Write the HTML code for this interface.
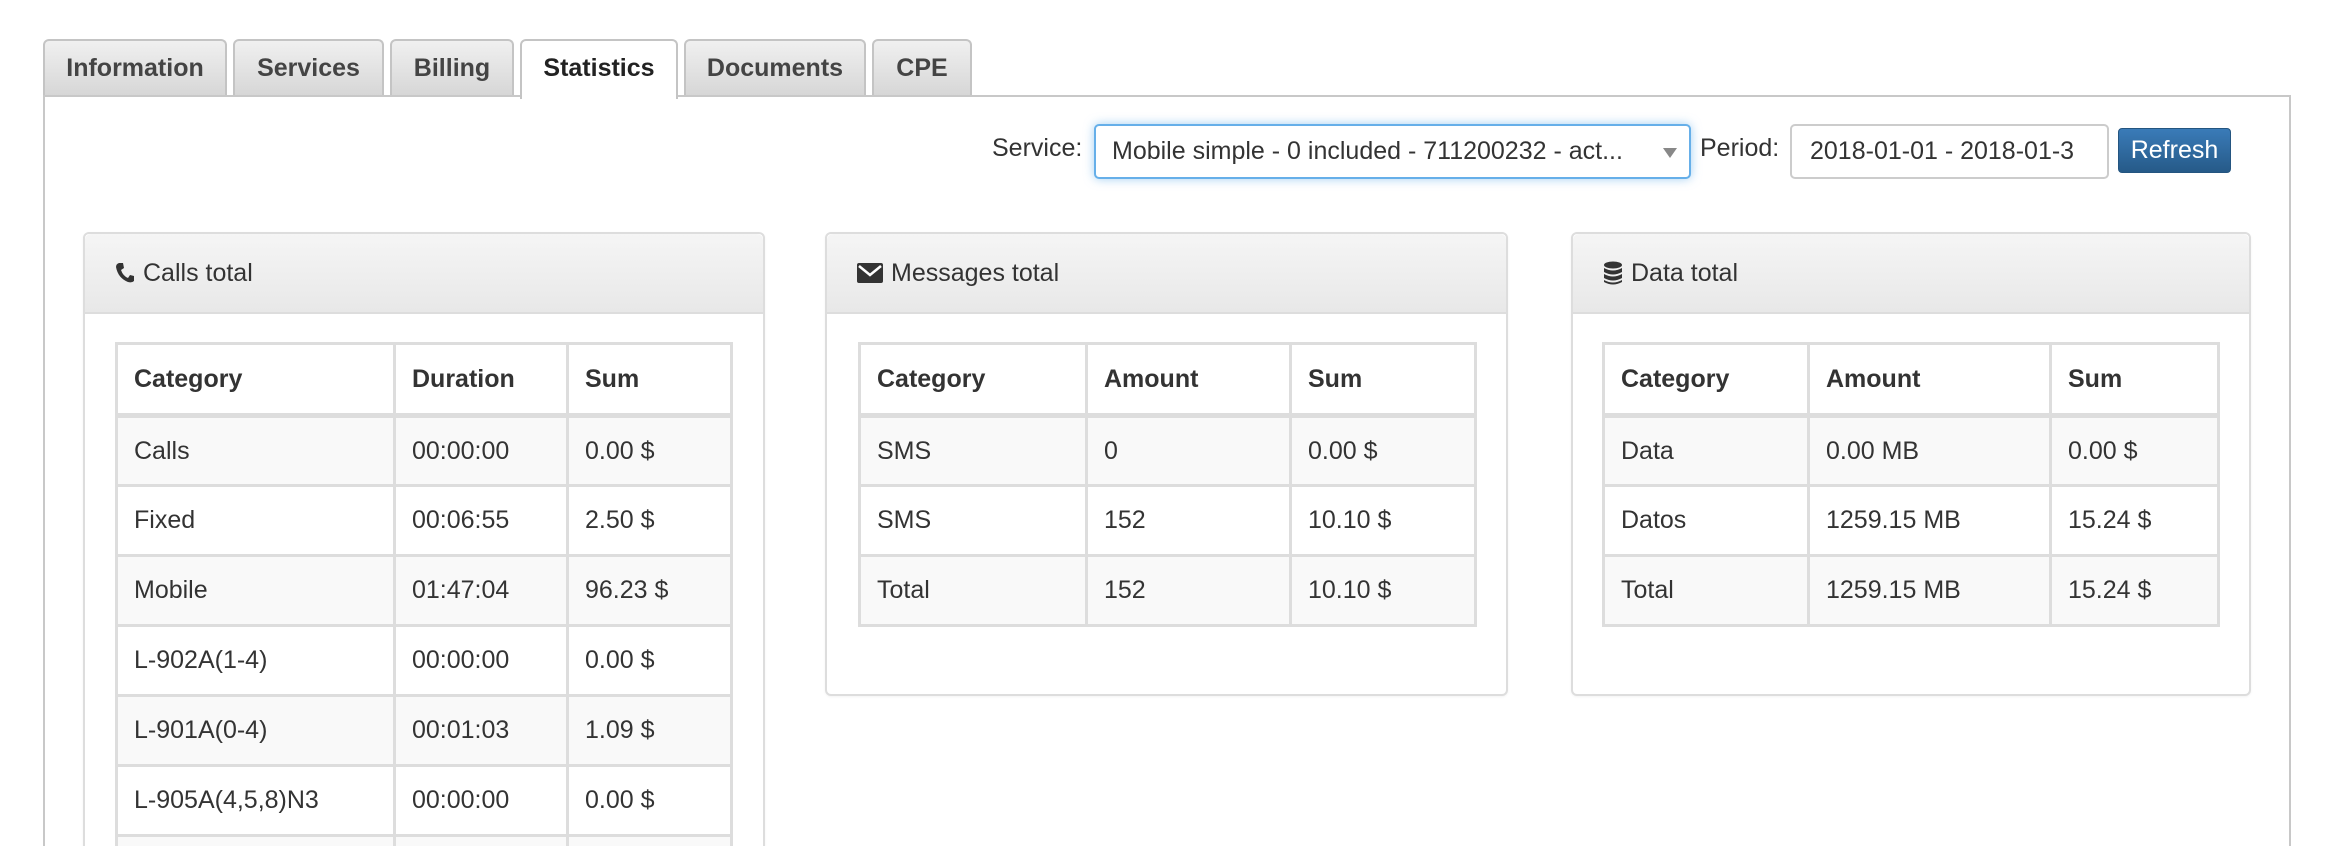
<!DOCTYPE html>
<html><head><meta charset="utf-8"><style>
*{box-sizing:border-box;margin:0;padding:0}
html,body{width:2340px;height:846px;overflow:hidden}
body{background:#fff;font-family:"Liberation Sans",Arial,sans-serif;color:#333;position:relative}
.tab{position:absolute;top:39px;height:57px;border:2px solid #c4c4c4;border-bottom:none;border-radius:6px 6px 0 0;background:linear-gradient(#f0f0f0,#d6d6d6);font-weight:bold;font-size:25px;text-align:center;line-height:54px;color:#444}
.tab.act{background:#fff;height:60px;color:#222;z-index:2}
.content{position:absolute;left:43px;top:95px;width:2248px;height:751px;border:2px solid #c8c8c8;border-bottom:none}
.lbl{position:absolute;font-size:25px;color:#333}
.sel{position:absolute;left:1094px;top:124px;width:597px;height:55px;border:2px solid #66afe9;border-radius:5px;box-shadow:0 0 10px rgba(102,175,233,.6);font-size:25px;line-height:51px;padding-left:16px;background:#fff}
.sel:after{content:"";position:absolute;right:12px;top:22px;border-left:7px solid transparent;border-right:7px solid transparent;border-top:10px solid #888}
.inp{position:absolute;left:1790px;top:124px;width:319px;height:55px;border:2px solid #ccc;border-radius:5px;font-size:25px;line-height:51px;padding-left:18px;background:#fff}
.btn{position:absolute;left:2118px;top:128px;width:113px;height:45px;border-radius:4px;background:linear-gradient(#3a7bb8,#265a88);border:1px solid #245580;color:#fff;font-size:25px;line-height:43px;text-align:center}
.panel{position:absolute;top:232px;border:2px solid #ddd;border-radius:6px;background:#fff;box-shadow:0 1px 2px rgba(0,0,0,.05)}
.ph{height:80px;background:linear-gradient(#f5f5f5,#e8e8e8);border-bottom:2px solid #ddd;border-radius:6px 6px 0 0;font-size:25px;line-height:78px;padding-left:30px;display:flex;align-items:center;gap:8px}
table{position:absolute;border-collapse:collapse;font-size:25px;table-layout:fixed}
td,th{border:3px solid #ddd;height:70px;padding:0 0 0 16px;text-align:left;vertical-align:middle}
th{font-weight:bold;border-bottom:5px solid #ddd;height:72px}
tr:nth-child(even) td{background:#f9f9f9}
</style></head><body>
<div class="tab" style="left:43px;width:184px">Information</div>
<div class="tab" style="left:233px;width:151px">Services</div>
<div class="tab" style="left:390px;width:124px">Billing</div>
<div class="tab act" style="left:520px;width:158px">Statistics</div>
<div class="tab" style="left:684px;width:182px">Documents</div>
<div class="tab" style="left:872px;width:100px">CPE</div>
<div class="content"></div>
<div class="lbl" style="left:992px;top:134px">Service:</div>
<div class="sel">Mobile simple - 0 included - 711200232 - act...</div>
<div class="lbl" style="left:1700px;top:134px">Period:</div>
<div class="inp">2018-01-01 - 2018-01-3</div>
<div class="btn">Refresh</div>

<div class="panel" style="left:83px;width:682px;height:620px">
<div class="ph"><svg width="20" height="22" viewBox="0 0 20 22"><path d="M4 1 L8 1 L9 6 L6 8 Q8 14 13 16 L15 13 L19 14 L19 19 Q17 21 13 20 Q3 16 1 5 Q1 2 4 1Z" fill="#333"/></svg>Calls total</div>
</div>
<table style="left:115px;top:342px;width:618px">
<colgroup><col style="width:278px"><col style="width:173px"><col></colgroup>
<tr><th>Category</th><th>Duration</th><th>Sum</th></tr>
<tr><td>Calls</td><td>00:00:00</td><td>0.00 $</td></tr>
<tr><td>Fixed</td><td>00:06:55</td><td>2.50 $</td></tr>
<tr><td>Mobile</td><td>01:47:04</td><td>96.23 $</td></tr>
<tr><td>L-902A(1-4)</td><td>00:00:00</td><td>0.00 $</td></tr>
<tr><td>L-901A(0-4)</td><td>00:01:03</td><td>1.09 $</td></tr>
<tr><td>L-905A(4,5,8)N3</td><td>00:00:00</td><td>0.00 $</td></tr>
</table>
<div style="position:absolute;left:115px;top:834px;width:618px;height:12px;border:3px solid #ddd;border-bottom:none;background:#f9f9f9"><div style="position:absolute;left:275px;top:0;width:3px;height:12px;background:#ddd"></div><div style="position:absolute;left:448px;top:0;width:3px;height:12px;background:#ddd"></div></div>

<div class="panel" style="left:825px;width:683px;height:464px">
<div class="ph"><svg width="26" height="20" viewBox="0 0 26 20"><rect x="0" y="0" width="26" height="20" rx="2" fill="#333"/><path d="M2 3 L13 12 L24 3" stroke="#fff" stroke-width="2.5" fill="none"/></svg>Messages total</div>
</div>
<table style="left:858px;top:342px;width:619px">
<colgroup><col style="width:227px"><col style="width:204px"><col></colgroup>
<tr><th>Category</th><th>Amount</th><th>Sum</th></tr>
<tr><td>SMS</td><td>0</td><td>0.00 $</td></tr>
<tr><td>SMS</td><td>152</td><td>10.10 $</td></tr>
<tr><td>Total</td><td>152</td><td>10.10 $</td></tr>
</table>

<div class="panel" style="left:1571px;width:680px;height:464px">
<div class="ph"><svg width="20" height="24" viewBox="0 0 20 24"><ellipse cx="10" cy="4" rx="9" ry="3.5" fill="#333"/><path d="M1 7 Q10 12 19 7 L19 11 Q10 16 1 11Z M1 13 Q10 18 19 13 L19 17 Q10 22 1 17Z M1 19 Q10 24 19 19 L19 21 Q10 26 1 21Z" fill="#333"/></svg>Data total</div>
</div>
<table style="left:1602px;top:342px;width:618px">
<colgroup><col style="width:205px"><col style="width:242px"><col></colgroup>
<tr><th>Category</th><th>Amount</th><th>Sum</th></tr>
<tr><td>Data</td><td>0.00 MB</td><td>0.00 $</td></tr>
<tr><td>Datos</td><td>1259.15 MB</td><td>15.24 $</td></tr>
<tr><td>Total</td><td>1259.15 MB</td><td>15.24 $</td></tr>
</table>
</body></html>
